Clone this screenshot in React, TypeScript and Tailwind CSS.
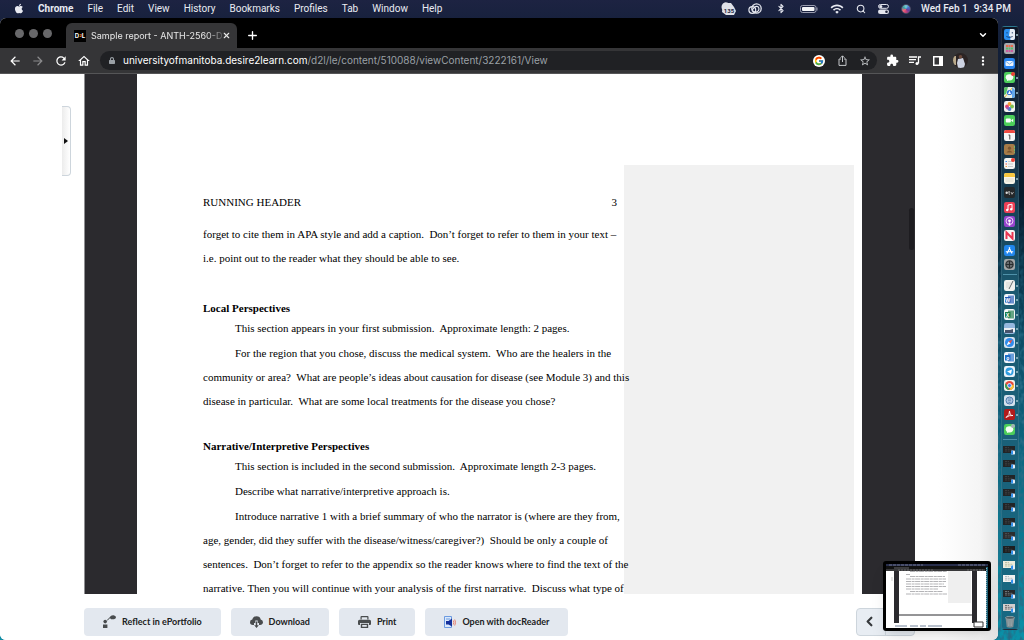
import React from "react";
import { Bluetooth, ChevronDown, ChevronLeft, Plus, Search, X } from "lucide-react";
import { FaApple, FaLock } from "react-icons/fa";
import { FcGoogle } from "react-icons/fc";
import {
  MdArrowBack,
  MdArrowForward,
  MdExtension,
  MdMoreVert,
  MdOutlineHome,
  MdRefresh,
  MdStarBorder,
  MdWifi,
} from "react-icons/md";

const menus = ["File", "Edit", "View", "History", "Bookmarks", "Profiles", "Tab", "Window", "Help"];

const MenuBar = () => (
  <header className="flex h-[18px] shrink-0 items-center pl-[14px] pr-[13px] pb-px font-['Roboto',sans-serif] text-[10px] leading-4 font-medium text-[#e9ebf2]">
    <FaApple className="mr-[14px] h-[11px] w-[10px]" />
    <nav className="flex gap-[14px] font-normal">
      <span className="font-bold">Chrome</span>
      {menus.map((m) => (
        <span key={m}>{m}</span>
      ))}
    </nav>
    <div className="ml-auto flex items-center">
      <svg className="mr-3 h-[14px] w-[15px]" viewBox="0 0 15 14">
        <path d="M2 2 4 .5 7 1l3 0 3 4 2 4-2 4H5L1 10Z" fill="#dfe1e8" />
        <circle cx="5" cy="5" r="4.5" fill="#dfe1e8" />
        <text x="8" y="11" textAnchor="middle" fontSize="6" fontWeight="700" fill="#20243c">
          135
        </text>
      </svg>
      <svg className="mr-[14px] h-3 w-[14px]" viewBox="0 0 14 12" fill="none" stroke="#e4e6ee">
        <circle cx="8.5" cy="5.5" r="4.7" strokeWidth="1.3" />
        <circle cx="4.3" cy="7" r="3.4" strokeWidth="1.2" />
        <path d="M5 8c2 2 6 1 6-2S7.500 2.500 6 5l-2 2" strokeWidth="1.2" />
      </svg>
      <Bluetooth className="mr-[14px] h-[11px] w-[10px]" strokeWidth={2.5} />
      <svg className="mr-3 h-2 w-[18px]" viewBox="0 0 18 8">
        <rect x=".5" y=".5" width="15.500" height="7" rx="2" fill="none" stroke="#9a9db0" />
        <rect x="2" y="2" width="12.500" height="4" rx="1" fill="#f4f5f8" />
        <path d="M17 2.500v3" stroke="#9a9db0" />
      </svg>
      <MdWifi className="mr-3 h-[14px] w-[14px]" />
      <Search className="mr-3 h-[10px] w-[10px]" strokeWidth={2.5} />
      <svg className="mr-3 h-[10px] w-[11px]" viewBox="0 0 11 10">
        <rect x=".5" y=".5" width="10" height="3.800" rx="1.900" fill="none" stroke="#e4e6ee" />
        <circle cx="2.800" cy="2.400" r="1.500" fill="#e4e6ee" />
        <rect x="0" y="5.400" width="11" height="4.600" rx="2.300" fill="#e4e6ee" />
        <circle cx="8.500" cy="7.700" r="1.300" fill="#20243c" />
      </svg>
      <span className="mr-[10px] h-[10px] w-[10px] rounded-full border border-[#4b4a66] bg-[conic-gradient(#7ad0d8,#4470c8,#6a3e9c,#c94278,#f1697a,#3c9b9e,#7ad0d8)]" />
      <span className="mr-[6px]">Wed Feb 1</span>
      <span>9:34 PM</span>
    </div>
  </header>
);

const TabStrip = () => (
  <div className="flex h-[30px] shrink-0 items-end bg-black pl-[15px] pr-[10px]">
    <div className="flex gap-[5px] pb-[10px]">
      <i className="h-[9px] w-[9px] rounded-full bg-[#68686a]" />
      <i className="h-[9px] w-[9px] rounded-full bg-[#68686a]" />
      <i className="h-[9px] w-[9px] rounded-full bg-[#68686a]" />
    </div>
    <div className="ml-[14px] flex h-[25px] w-[171px] items-center rounded-t-[6px] bg-[#353537] pl-2 pr-[7px] text-[9px] text-[#e8e8e8]">
      <span className="mr-[5px] flex h-3 w-3 shrink-0 items-center justify-center bg-black text-[6px] font-bold text-white">
        D<b className="text-[4px] text-[#e87511]">2</b>L
      </span>
      <span className="shrink-0 whitespace-nowrap [mask-image:linear-gradient(to_right,black_88%,transparent_104%)]">
        Sample report - ANTH-2560-D
      </span>
      <button aria-label="Close tab" className="ml-auto">
        <X className="h-[9px] w-[9px]" strokeWidth={3} />
      </button>
    </div>
    <button aria-label="New tab" className="ml-[9px] pb-[6px] text-white">
      <Plus className="h-[13px] w-[13px]" strokeWidth={2.500} />
    </button>
    <button aria-label="Search tabs" className="ml-auto pb-2 text-white">
      <ChevronDown className="h-[10px] w-[10px]" strokeWidth={3.500} />
    </button>
  </div>
);

const Toolbar = () => (
  <div className="flex h-[26px] shrink-0 items-center border-b border-[#555557] bg-[#353537] pl-2 pr-2 text-white">
    <button aria-label="Back" className="mr-[9px]">
      <MdArrowBack className="h-[14px] w-[14px]" />
    </button>
    <button aria-label="Forward" className="mr-[9px] text-[#8b8b8d]">
      <MdArrowForward className="h-[14px] w-[14px]" />
    </button>
    <button aria-label="Reload" className="mr-[9px]">
      <MdRefresh className="h-[14px] w-[14px]" />
    </button>
    <button aria-label="Home" className="mr-[9px]">
      <MdOutlineHome className="h-[14px] w-[14px]" />
    </button>
    <div className="flex h-[19px] min-w-0 flex-1 items-center rounded-full bg-[#202124] pl-[9px] pr-[6px]">
      <FaLock className="mr-2 h-[7px] w-[6px] text-[#9aa0a6]" />
      <span className="min-w-0 flex-1 overflow-hidden whitespace-nowrap text-[10px] text-[#9aa0a6]">
        <span className="text-white">universityofmanitoba.desire2learn.com</span>
        /d2l/le/content/510088/viewContent/3222161/View
      </span>
      <span className="mr-[13px] flex h-3 w-3 items-center justify-center rounded-full bg-white">
        <FcGoogle className="h-[10px] w-[10px]" />
      </span>
      <button aria-label="Share" className="mr-3 text-[#c4c7ca]">
        <svg className="h-[11px] w-[9px]" viewBox="0 0 9 11" fill="none" stroke="currentColor">
          <path d="M3 4H1v6.400h7V4H6M4.500 7V1M2.500 2.800l2-2 2 2" />
        </svg>
      </button>
      <button aria-label="Bookmark" className="text-[#c4c7ca]">
        <MdStarBorder className="h-3 w-3" />
      </button>
    </div>
    <button aria-label="Extensions" className="ml-[9px]">
      <MdExtension className="h-[13px] w-[13px]" />
    </button>
    <button aria-label="Media" className="ml-[10px]">
      <svg className="h-[11px] w-[12px]" viewBox="0 0 12 11" fill="none" stroke="currentColor" strokeWidth="1.300">
        <path d="M0 2h8M0 4.700h7M0 7.400h5M9.500 8.500V2H12" />
        <circle cx="8" cy="8.600" r="1.500" fill="currentColor" stroke="none" />
      </svg>
    </button>
    <button aria-label="Side panel" className="ml-3">
      <svg className="h-[10px] w-[10px]" viewBox="0 0 10 10">
        <path d="M0 0h10v10H0Z" fill="#fff" />
        <path d="M1.500 1.500H6v7H1.500Z" fill="#353537" />
      </svg>
    </button>
    <button aria-label="Profile" className="ml-[10px]">
      <svg className="h-[15px] w-[15px] rounded-full" viewBox="0 0 15 15">
        <path d="M0 0h15v15H0Z" fill="#2b2424" />
        <path d="M0 3h3v9H0Z" fill="#b9a98a" />
        <path d="M5 6l5-1 2 6-1 4H5L4 10Z" fill="#cdd3e2" />
        <circle cx="7.500" cy="3.800" r="1.800" fill="#6b4a3c" />
      </svg>
    </button>
    <button aria-label="Menu" className="ml-2">
      <MdMoreVert className="h-[14px] w-[14px]" />
    </button>
  </div>
);

const Line = ({ children, indent = false }: { children: React.ReactNode; indent?: boolean }) => (
  <span className={indent ? "block pl-8" : "block"}>{children}</span>
);

const Document = () => (
  <div className="relative flex min-h-0 flex-1 overflow-hidden border-l border-[#8f8f92] bg-[#2b2a2e] pl-[52px] pr-[53px]">
    <div className="flex min-w-0 flex-1 bg-white pt-[91px] pr-2">
      <article className="z-10 min-w-0 flex-1 pl-[66px] pt-[29px] font-['Liberation_Serif',serif] text-[11px] leading-6 whitespace-pre text-black">
        <div className="mb-2 flex justify-between pr-[7px] leading-4">
          <span>RUNNING HEADER</span>
          <span>3</span>
        </div>
        <p className="pt-1">
          <Line>forget to cite them in APA style and add a caption.  Don’t forget to refer to them in your text –</Line>
          <Line>i.e. point out to the reader what they should be able to see.</Line>
        </p>
        <h2 className="mt-[30px] font-bold leading-4">Local Perspectives</h2>
        <div className="space-y-px">
          <p>
            <Line indent>This section appears in your first submission.  Approximate length: 2 pages.</Line>
          </p>
          <p>
            <Line indent>For the region that you chose, discuss the medical system.  Who are the healers in the</Line>
            <Line>community or area?  What are people’s ideas about causation for disease (see Module 3) and this</Line>
            <Line>disease in particular.  What are some local treatments for the disease you chose?</Line>
          </p>
        </div>
        <h2 className="mt-[25px] font-bold leading-4">Narrative/Interpretive Perspectives</h2>
        <div className="space-y-px">
          <p>
            <Line indent>This section is included in the second submission.  Approximate length 2-3 pages.</Line>
          </p>
          <p>
            <Line indent>Describe what narrative/interpretive approach is.</Line>
          </p>
          <p>
            <Line indent>Introduce narrative 1 with a brief summary of who the narrator is (where are they from,</Line>
            <Line>age, gender, did they suffer with the disease/witness/caregiver?)  Should be only a couple of</Line>
            <Line>sentences.  Don’t forget to refer to the appendix so the reader knows where to find the text of the</Line>
            <Line>narrative. Then you will continue with your analysis of the first narrative.  Discuss what type of</Line>
          </p>
        </div>
      </article>
      <aside className="w-[230px] shrink-0 bg-[#f1f1f1]" />
    </div>
    <i className="absolute top-[134px] right-px h-[42px] w-[5px] rounded-full bg-[#1d1c20]" />
  </div>
);

const actionClass =
  "flex h-7 items-center justify-center rounded-[4px] bg-[#e3e8ef] px-[19px] text-[9px] font-bold text-[#202122] font-['Lato',sans-serif]";

const Actions = () => (
  <footer className="flex h-[46px] shrink-0 items-center gap-[10px] pt-[10px] pb-px">
    <button className={`${actionClass} gap-[6px]`}>
      <svg className="h-[13px] w-[13px]" viewBox="0 0 13 13" fill="#494c4e">
        <circle cx="2.200" cy="6.600" r="1.800" />
        <path d="M0 9.500h4.400V13H0ZM4 5l3-3 .6.6-3 3ZM6.500 2.500Q8 0 10.500.3q2.500.5 2.500 2T11 4.300H8Z" />
      </svg>
      Reflect in ePortfolio
    </button>
    <button className={`${actionClass} gap-[6px]`}>
      <svg className="h-3 w-[13px]" viewBox="0 0 13 12" fill="#494c4e">
        <path d="M3 9Q0 8.800 0 6.200 0 4 2.300 3.600 3 .3 6.500.3T10.700 3.600Q13 4 13 6.300T10 9H9V7L7.700 7V4.500H5.300V7H4V9Z" />
        <path d="M5.800 5.500h1.400v3.700h1.600L6.500 12 4.200 9.200h1.600Z" />
      </svg>
      Download
    </button>
    <button className={`${actionClass} gap-[6px]`}>
      <svg className="h-3 w-[13px]" viewBox="0 0 13 12" fill="#494c4e">
        <path d="M2.500 3.500V1Q2.500 0 3.500 0h6q1 0 1 1v2.500H9.300V1.300H3.700v2.200Z" />
        <path d="M1.500 3.800h10Q13 3.800 13 5.300V8q0 1-1 1h-1V7H2v2H1Q0 9 0 8V5.300Q0 3.800 1.500 3.800Z" />
        <path d="M2.800 7.700h7.400V12H2.800ZM4.200 9v1.700h4.600V9Z" fillRule="evenodd" />
      </svg>
      Print
    </button>
    <button className={`${actionClass} gap-[6px]`}>
      <svg className="h-3 w-3" viewBox="0 0 12 12">
        <path d="M.5.500h7v11h-7Z" fill="#dbe9fb" stroke="#6d9be0" />
        <path d="M2 3h4" stroke="#6d9be0" />
        <path d="M2 5h2.500L8 2.500v8L4.500 8.500H2Z" fill="#14309c" />
        <path d="M9.300 4.500q1.200 2 0 4M10.700 3.500q1.800 3 0 6" fill="none" stroke="#e8826f" />
      </svg>
      Open with docReader
    </button>
    <div className="ml-auto flex h-7 w-[59px] overflow-hidden rounded-[4px] border border-[#cdd5dc] bg-[#e8edf3]">
      <button aria-label="Previous" className="flex w-[29px] items-center justify-center border-r border-[#cdd5dc] pr-[3px]">
        <ChevronLeft className="h-[15px] w-[15px] text-[#36393c]" strokeWidth={3.500} />
      </button>
      <button aria-label="Next" className="flex-1" />
    </div>
  </footer>
);

// floating capture preview in the corner of the screen
const Thumbnail = () => (
  <div className="absolute right-[33px] bottom-[9px] flex h-[70px] w-[108px] flex-col overflow-hidden rounded-[3px] border-[3px] border-black bg-white shadow-lg">
    <svg className="h-full w-full" viewBox="0 0 102 64" preserveAspectRatio="none">
      <path d="M0 0h102v2H0Z" fill="#272d4b" />
      <path d="M0 2h102v5H0Z" fill="#111" />
      <path d="M3 1h34M72 1h28" stroke="#8a90a6" strokeWidth=".7" strokeDasharray="3 1" />
      <path d="M8 3h15v2H8Z" fill="#3c3c3e" />
      <path d="M0 5h99v2H0Z" fill="#38383a" />
      <path d="M12 6h35M81 6h16" stroke="#858588" strokeWidth=".6" strokeDasharray="2 1" />
      <path d="M8 7h5v52H8ZM86 7h5v52h-5Z" fill="#2b2a2e" />
      <path d="M62 7h23v32H62Z" fill="#efefef" />
      <path d="M13 51h73" stroke="#2b2a2e" />
      <g stroke="#b4b4b7" strokeWidth="1" strokeDasharray="5 .6 3 .5">
        <path d="M24 7.500h37M20 10.500h4M24 12.500h35M20 15h40M20 17.500h40M20 20h38M20 22.500h40M20 25h32M24 27.500h33M20 30h41" />
      </g>
      <path d="M9 62h12M24 62h8M34 62h6M42 62h14" stroke="#b9c1cd" strokeWidth="2" />
      <path d="M6 13v4" stroke="#999" strokeWidth=".5" />
      <path d="M88 58h9v5H88Z" fill="#fff" stroke="#333" />
      <path d="M100 3h2v61h-2Z" fill="#1d6177" />
      <path d="M100.500 4v57" stroke="#93b3bd" strokeDasharray="1 1" />
    </svg>
  </div>
);

const R = ({ f, children }: { f: string; children?: React.ReactNode }) => (
  <svg className="h-[11px] w-[11px]" viewBox="0 0 11 11">
    <rect width="11" height="11" rx="2.200" fill={f} />
    {children}
  </svg>
);

const WordIcon = ({ c, t }: { c: string; t: string }) => (
  <R f="#f3f6fa">
    <path d="M4 1.500h6v8H4Z" fill={c} opacity=".65" />
    <path d="M1 3h5.500v5.500H1Z" fill={c} />
    <text x="3.700" y="7.700" fontSize="5" fontWeight="700" textAnchor="middle" fill="#fff">
      {t}
    </text>
  </R>
);

const Badge = () => <circle cx="9" cy="2" r="2" fill="#ee4036" />;

const Bubble = ({ badge }: { badge: React.ReactNode }) => (
  <R f="#4dce5b">
    <ellipse cx="5.500" cy="5.300" rx="3.800" ry="3.100" fill="#f4fff4" />
    <path d="M3 7v2l2-1Z" fill="#f4fff4" />
    {badge}
  </R>
);

const apps: { icon: React.ReactNode; open?: boolean }[] = [
  {
    open: true,
    icon: (
      <R f="#2a8ff0">
        <path d="M6 0h3q2 0 2 2v7q0 2-2 2H6.500L6 7H5Z" fill="#e6eef6" />
        <path d="M3 3v1.500M8.300 3v1.500M2.300 7.500Q5.500 9.500 8.700 7.500" stroke="#16345c" strokeWidth=".8" fill="none" />
      </R>
    ),
  },
  {
    icon: (
      <R f="#a6a8ad">
        <path d="M2 3h7" stroke="#e86a4c" strokeWidth="2" strokeDasharray="2 .5" />
        <path d="M2 5.500h7" stroke="#58b868" strokeWidth="2" strokeDasharray="2 .5" />
        <path d="M2 8h7" stroke="#c95c9e" strokeWidth="2" strokeDasharray="2 .5" />
      </R>
    ),
  },
  {
    icon: (
      <R f="#2984ee">
        <rect x="1.500" y="3" width="8" height="5" rx="1" fill="#edf5fd" />
        <path d="m2 3.500 3.500 2.600L9 3.500" stroke="#4a93e4" strokeWidth=".7" fill="none" />
      </R>
    ),
  },
  { open: true, icon: <Bubble badge={<Badge />} /> },
  {
    open: true,
    icon: (
      <R f="#e7efe5">
        <path d="M0 2Q0 0 2 0h2L2 7l-2 1Z" fill="#58bf65" />
        <path d="M8 0l3 3v6q0 2-2 2H8Z" fill="#63a8e9" />
        <path d="m1 10 7-9" stroke="#f2bf3b" />
        <circle cx="5.500" cy="5.500" r="2.600" fill="#2f73d9" />
        <path d="m5.500 3.500 1.500 3.500H4Z" fill="#fff" />
      </R>
    ),
  },
  {
    icon: (
      <R f="#f5f4f1">
        <circle cx="5.500" cy="3" r="1.900" fill="#f3a334" />
        <circle cx="8" cy="5.500" r="1.900" fill="#7fc250" />
        <circle cx="5.500" cy="8" r="1.900" fill="#4c82d2" />
        <circle cx="3" cy="5.500" r="1.900" fill="#de4870" />
        <circle cx="3.700" cy="7.300" r="1.300" fill="#9a5bb6" />
      </R>
    ),
  },
  {
    icon: (
      <R f="#4ccf5a">
        <rect x="1.800" y="3.500" width="5" height="4" rx="1" fill="#fff" />
        <path d="m7.200 5.200 2-1.500v3.600l-2-1.500Z" fill="#fff" />
      </R>
    ),
  },
  {
    icon: (
      <R f="#f7f7f7">
        <path d="M0 3V2Q0 0 2 0h7q2 0 2 2v1Z" fill="#ef4b43" />
        <path d="M4.500 5h1.300v4.500" stroke="#444" fill="none" />
      </R>
    ),
  },
  {
    icon: (
      <R f="#a57b48">
        <circle cx="5.500" cy="4.200" r="1.600" fill="#7b5630" />
        <path d="M2.500 8.500q3-4 6 0Z" fill="#7b5630" />
        <path d="M10.500 2v7" stroke="#73b86c" strokeDasharray="2 1" />
      </R>
    ),
  },
  {
    icon: (
      <R f="#f4f4f2">
        <path d="M4 3.500h5M4 6h5M4 8.500h5" stroke="#b5b8bb" strokeWidth=".7" />
        <path d="M1.500 3.500h1.500" stroke="#3a8af0" />
        <path d="M1.500 6h1.500" stroke="#ee5540" />
        <path d="M1.500 8.500h1.500" stroke="#f19a3b" />
        <Badge />
      </R>
    ),
  },
  {
    open: true,
    icon: (
      <R f="#f8f5e8">
        <path d="M0 4V2Q0 0 2 0h7q2 0 2 2v2Z" fill="#f7c740" />
        <path d="M1.500 6h8M1.500 8h8" stroke="#cfccc0" strokeWidth=".6" />
      </R>
    ),
  },
  {
    icon: (
      <R f="#25282a">
        <circle cx="2.700" cy="5.700" r="1.200" fill="#ddd" />
        <path d="M5 4v3.300h1M4.400 5h1.600M7 5l1 2.300L9.500 5" stroke="#ddd" strokeWidth=".7" fill="none" />
      </R>
    ),
  },
  {
    icon: (
      <R f="#ee4056">
        <path d="M4 8V3l4-.8v5" stroke="#fff" fill="none" />
        <circle cx="3.200" cy="8" r="1.200" fill="#fff" />
        <circle cx="7.200" cy="7.300" r="1.200" fill="#fff" />
      </R>
    ),
  },
  {
    icon: (
      <R f="#9744cd">
        <circle cx="5.500" cy="5" r="3.500" fill="none" stroke="#fff" strokeWidth=".8" />
        <circle cx="5.500" cy="4.800" r="1.400" fill="#fff" />
        <path d="M5.500 6.500v3.200" stroke="#fff" strokeWidth="1.500" />
      </R>
    ),
  },
  {
    icon: (
      <R f="#f7f5f5">
        <path d="M2.500 9V2.500L8.500 8.500V2" stroke="#e93653" strokeWidth="2" fill="none" />
      </R>
    ),
  },
  {
    icon: (
      <R f="#2186ec">
        <path d="M3 8.500 6 2.500M5 2.500l3 6M1.800 6.800h7.400" stroke="#fff" strokeWidth="1.100" />
      </R>
    ),
  },
  {
    icon: (
      <R f="#a3a7a8">
        <circle cx="5.500" cy="5.500" r="3.600" fill="#6a6e70" stroke="#313536" strokeWidth="1.300" />
        <path d="M5.500 2v7M2 5.500h7" stroke="#292d2e" />
      </R>
    ),
  },
];

const moreApps: { icon: React.ReactNode; open?: boolean }[] = [
  {
    open: true,
    icon: (
      <R f="#f1f1ed">
        <path d="M2 3h5M2 5h4M2 7h3" stroke="#c7c8c5" strokeWidth=".6" />
        <path d="m5 9 4-8" stroke="#636a6c" />
      </R>
    ),
  },
  { open: true, icon: <WordIcon c="#2058b5" t="W" /> },
  { open: true, icon: <WordIcon c="#197a46" t="X" /> },
  {
    open: true,
    icon: (
      <R f="#95b8dd">
        <path d="M0 5h11v4H0Z" fill="#eceff2" />
        <path d="M1 7h5l3-1v4H1Z" fill="#46536b" />
      </R>
    ),
  },
  {
    open: true,
    icon: (
      <R f="#d6e2ee">
        <circle cx="5.500" cy="5.500" r="4.500" fill="#308cec" />
        <path d="m8.500 2.500-2 4-2-2Z" fill="#ee5144" />
        <path d="m2.500 8.500 2-4 2 2Z" fill="#fff" />
      </R>
    ),
  },
  { open: true, icon: <WordIcon c="#1f6fc8" t="o" /> },
  {
    open: true,
    icon: (
      <R f="#eaf3fa">
        <circle cx="5.500" cy="5.500" r="4" fill="#2f9de0" />
        <path d="m3 5.500 5-2-1 4.500-2-1.500Z" fill="#fff" />
      </R>
    ),
  },
  {
    open: true,
    icon: (
      <R f="#f1f1ec">
        <circle cx="5.500" cy="5.500" r="4.500" fill="#e64a3c" />
        <path d="M1.600 3.300 5.500 10A4.500 4.500 0 0 1 1.600 3.300Z" fill="#35a554" />
        <path d="M5.500 10 7.500 5.500 9.800 4.500A4.500 4.500 0 0 1 5.500 10Z" fill="#f9c634" />
        <circle cx="5.500" cy="5.500" r="2" fill="#3d82ed" stroke="#fff" strokeWidth=".8" />
      </R>
    ),
  },
  {
    open: true,
    icon: (
      <R f="#d6e2ed">
        <circle cx="5.500" cy="5.500" r="3.500" fill="#adc6e1" stroke="#517cae" />
        <path d="M4 4h3M4 5.700h3M4.500 7.500h2" stroke="#517cae" strokeWidth=".7" />
      </R>
    ),
  },
  {
    open: true,
    icon: (
      <R f="#b31b1b">
        <path d="M2 8.500Q6 6 5.500 2 6 7 9 6.500 5 6 2 8.500" stroke="#fff" fill="none" strokeWidth=".9" />
      </R>
    ),
  },
  { icon: <Bubble badge={<circle cx="9" cy="2" r="2" fill="#a6b2b5" />} /> },
];

// minimized windows: body colour and content colour
const minimized = [
  ["#222426", "#45484b"],
  ["#222426", "#45484b"],
  ["#222426", "#45484b"],
  ["#222426", "#45484b"],
  ["#222426", "#45484b"],
  ["#222426", "#45484b"],
  ["#2b2d2f", "#57595c"],
  ["#1d1f20", "#45484b"],
  ["#ecebdc", "#a9b08c"],
  ["#f1f1f0", "#9ba7b0"],
  ["#25282a", "#8b9094"],
  ["#d3cfce", "#454044"],
];

const DockItem = ({ open, children }: { open?: boolean; children: React.ReactNode }) => (
  <div className="relative flex h-[11px] w-full shrink-0 items-center justify-center pr-px">
    {children}
    {open && <i className="absolute top-[5px] right-0 h-[2px] w-[2px] rounded-full bg-[#9fc0cd]" />}
  </div>
);

const Dock = () => (
  <aside className="flex w-[18px] flex-col items-center justify-between rounded-[4px] border border-[#ffffff18] bg-linear-to-b from-[#0e1626] via-[#1b5a71] via-45% to-[#176983] pt-[2px] pb-px">
    {apps.map((a, i) => (
      <DockItem key={i} open={a.open}>
        {a.icon}
      </DockItem>
    ))}
    <hr className="my-px h-px w-[14px] shrink-0 border-0 bg-[#4f91a9]" />
    {moreApps.map((a, i) => (
      <DockItem key={i} open={a.open}>
        {a.icon}
      </DockItem>
    ))}
    <hr className="my-px h-px w-[14px] shrink-0 border-0 bg-[#4f91a9]" />
    {minimized.map(([bg, fg], i) => (
      <DockItem key={i}>
        <svg className="h-[10px] w-[13px]" viewBox="0 0 13 10">
          <path d="M0 1h12v7H0Z" fill={bg} />
          <path d="M2 2.500h4M2 4.300h8M2 6h6" stroke={fg} strokeWidth=".7" strokeDasharray="2 .7" />
          <rect x="8" y="5.500" width="4" height="4" rx=".8" fill="#e6eef6" />
          <path d="M8 6.500q0-1 1-1h1v4H9q-1 0-1-1Z" fill="#3290ee" />
        </svg>
      </DockItem>
    ))}
    <DockItem>
      <svg className="h-[12px] w-[10px]" viewBox="0 0 10 12">
        <path d="M.5 1.500h9L8.300 11q-3.300 1.500-6.600 0Z" fill="#7f8d92" />
        <ellipse cx="5" cy="1.800" rx="4.500" ry="1.500" fill="#4e5d63" stroke="#bac4c7" strokeWidth=".6" />
        <path d="m3 4 .5 6M5 4v6M7 4l-.5 6" stroke="#a8b3b7" strokeWidth=".6" />
      </svg>
    </DockItem>
  </aside>
);

const Wallpaper = () => (
  <svg className="absolute inset-0 h-full w-full" aria-hidden="true">
    <defs>
      <linearGradient id="sky" x2="0" y2="1">
        <stop offset="0" stopColor="#1d2342" />
        <stop offset=".05" stopColor="#14203a" />
        <stop offset=".3" stopColor="#071a2b" />
        <stop offset=".55" stopColor="#0d4f69" />
        <stop offset="1" stopColor="#0b91a8" />
      </linearGradient>
      <linearGradient id="fade" x2="0" y2="1">
        <stop offset=".3" stopColor="#000" />
        <stop offset=".6" stopColor="#fff" />
      </linearGradient>
      <mask id="lower">
        <rect width="100%" height="100%" fill="url(#fade)" />
      </mask>
      <filter id="water">
        <feTurbulence type="fractalNoise" baseFrequency=".25 .15" numOctaves="2" seed="4" />
        <feColorMatrix values="0 0 0 0 .02  0 0 0 0 .15  0 0 0 0 .24  3 0 0 0 -1.200" />
      </filter>
    </defs>
    <rect width="100%" height="100%" fill="url(#sky)" />
    <rect width="100%" height="100%" filter="url(#water)" mask="url(#lower)" />
  </svg>
);

const App = () => (
  <div className="relative flex h-screen flex-col overflow-hidden bg-[#1d2342] font-['Inter',sans-serif]">
    <Wallpaper />
    <div className="relative flex min-h-0 flex-1 flex-col">
      <MenuBar />
      <div className="flex min-h-0 flex-1">
        <main className="flex min-w-0 flex-1 flex-col overflow-hidden rounded-[6px] bg-white">
          <TabStrip />
          <Toolbar />
          <div className="flex min-h-0 flex-1 bg-[linear-gradient(to_left,#e2e2e2,#f5f5f5_18px,#ffffff_60px)]">
            <div className="flex w-[84px] shrink-0 flex-col items-end pt-8 pr-[13px]">
              <button
                aria-label="Expand side panel"
                className="flex h-[70px] w-[9px] items-center rounded-r-[4px] border border-l-0 border-[#cdd5dc] bg-linear-to-r from-[#ececec] to-white pl-[2px]"
              >
                <svg className="h-[6px] w-1" viewBox="0 0 4 6">
                  <path d="M0 0l4 3-4 3Z" fill="#111" />
                </svg>
              </button>
            </div>
            <div className="flex min-w-0 flex-1 flex-col">
              <Document />
              <Actions />
            </div>
            <div className="w-[83px] shrink-0" />
          </div>
        </main>
        <div className="flex pt-2 pr-[5px] pb-[10px] pl-[3px]">
          <Dock />
        </div>
      </div>
    </div>
    <Thumbnail />
  </div>
);

export default App;
